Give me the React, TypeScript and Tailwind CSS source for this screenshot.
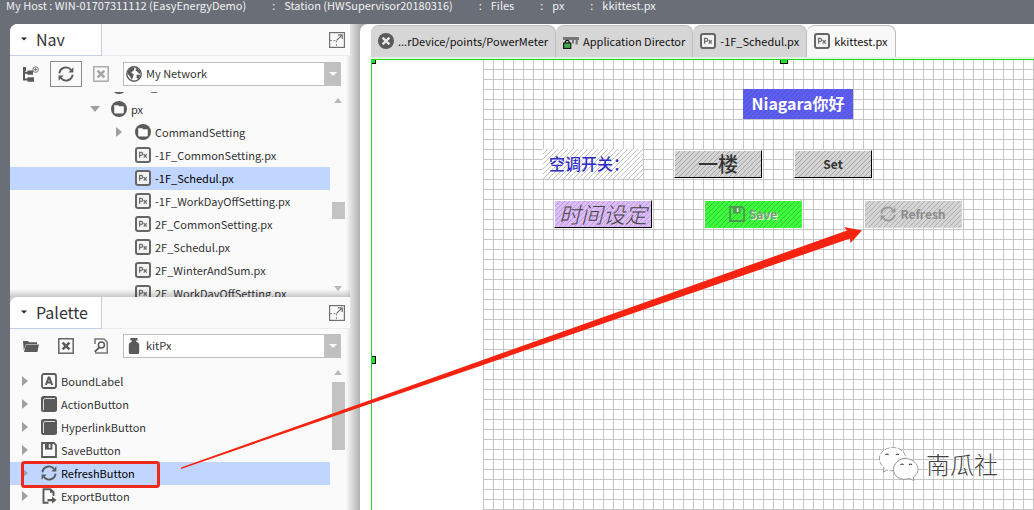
import React, { ReactNode } from "react";

type IconProps = { className?: string };

const ink = "#5a5a5a";

const Svg = ({ children, className = "" }: { children: ReactNode; className?: string }) => (
  <svg viewBox="0 0 16 16" className={`size-4 shrink-0 ${className}`} fill="none" aria-hidden="true">
    {children}
  </svg>
);

const PxIcon = () => (
  <Svg>
    <rect x="1" y="1" width="14" height="14" rx="2" stroke="#666" strokeWidth="2" fill="#f3f3f3" />
    <path d="M4.6 10.8V5.4H6.2a1.5 1.5 0 0 1 0 3H4.6M8.7 7.2l3 3.4M11.7 7.2l-3 3.4" stroke="#707070" strokeWidth="1.3" />
  </Svg>
);

const FolderIcon = () => (
  <Svg>
    <circle cx="8" cy="8" r="8" fill={ink} />
    <path d="M3.2 4.2h4l1 1h4.6v6q0 1.2-1.2 1.2H4.4q-1.2 0-1.2-1.2z" fill="#fafafa" />
  </Svg>
);

const LabelIcon = () => (
  <Svg>
    <rect x="1" y="1" width="14" height="14" rx="2" stroke={ink} strokeWidth="1.8" />
    <path d="M4.9 12 7.6 4.6h.8L11.1 12M6 9.4h4" stroke={ink} strokeWidth="2" />
  </Svg>
);

const BoxIcon = () => (
  <Svg>
    <rect width="16" height="16" rx="2.5" fill={ink} />
    <path d="M2.5 14V4.2q0-1.7 1.7-1.7H14" stroke="#ddd" strokeWidth="1" />
  </Svg>
);

const SaveIcon = ({ className }: IconProps) => (
  <Svg className={className}>
    <path d="M1 1h12l2 2v12H1z" stroke="currentColor" strokeWidth="1.8" />
    <path d="M4 1h7.4v6.6H4z" fill="currentColor" />
    <path d="M7.8 2.2h1.6v3.8H7.8z" fill="#f5f5f5" />
  </Svg>
);

const RefreshIcon = ({ className }: IconProps) => (
  <Svg className={className}>
    <path d="M1.4 7.4A6.6 6.6 0 0 1 13 3.8M14.6 8.6A6.6 6.6 0 0 1 3 12.2" stroke="currentColor" strokeWidth="1.9" />
    <path d="M15.4 1.2v5.2h-5zM.6 14.8V9.6h5z" fill="currentColor" />
  </Svg>
);

const ExportIcon = () => (
  <Svg>
    <path d="M12.5 8V4.2L9.3 1.2H2.5v13.6h5" stroke={ink} strokeWidth="1.9" />
    <path d="M9 1v3.8h4z" fill={ink} />
    <path d="M6.5 11h4.5V8.6l4.6 3.5-4.6 3.5v-2.4H6.5z" fill={ink} />
  </Svg>
);

const TreeAddIcon = () => (
  <Svg>
    <path d="M1 1v12.5h6M1 6.7h6" stroke={ink} strokeWidth="2" />
    <path d="M0 1h3v4H0zM4.5 4.6H10v4.2H4.5zM4.5 11.2H11v4.6H4.5z" fill={ink} />
    <circle cx="12.6" cy="3.6" r="2.8" stroke="#777" fill="#f4f4f4" />
    <path d="M11 3.6h3.2M12.6 2v3.2" stroke="#777" />
  </Svg>
);

const CloseBoxIcon = ({ className }: IconProps) => (
  <Svg className={className}>
    <rect x=".8" y=".8" width="14.4" height="14.4" stroke="currentColor" strokeWidth="1.4" />
    <path d="m4.6 4.6 6.8 6.8M11.4 4.6l-6.8 6.8" stroke="currentColor" strokeWidth="2.6" />
  </Svg>
);

const OpenFolderIcon = () => (
  <Svg>
    <path d="M0 3h5l1 1.2h8V6H3L.8 12.5z" fill={ink} />
    <path d="M3 6.4h13L14.4 14H1z" fill={ink} />
  </Svg>
);

const FindIcon = () => (
  <Svg>
    <path d="M2 6V1h9l3.2 3v11H2" stroke="#777" strokeWidth="1.5" />
    <circle cx="8.4" cy="7" r="3" stroke={ink} strokeWidth="1.5" />
    <path d="m6.3 9.3-4.6 4.5" stroke={ink} strokeWidth="1.8" />
  </Svg>
);

const GlobeIcon = () => (
  <Svg>
    <circle cx="8" cy="8" r="7.2" stroke={ink} strokeWidth="1.4" fill="#fff" />
    <path d="M1.6 5 5 1.4l3.6.2L7.8 4.4 5.2 6.6 7.8 8.4 7 11l-1.2 3L4 10.4 1.4 7.8zM10 1.8l3.6 2.6 1.2 3.4-2-.4L11.2 5.4l-1.6-.6zM10.8 8.4l3.6.6-2.2 4.2-1.8-1.8z" fill={ink} />
  </Svg>
);

const BottleIcon = () => (
  <Svg>
    <path d="M4.4 0h7.2v2.4h-1.4v1.4q3 .8 3 3.2v7.4q0 1.6-1.6 1.6H4.4q-1.6 0-1.6-1.6V7q0-2.4 3-3.2V2.4H4.4z" fill={ink} />
  </Svg>
);

const PopOutIcon = () => (
  <Svg>
    <rect x=".6" y=".6" width="14.8" height="14.8" stroke="#6f6f6f" strokeWidth="1.2" />
    <path d="M9 2.8h4.2V7M13.2 2.8 7.6 8.4" stroke="#6f6f6f" strokeWidth="1.2" />
    <path d="M1 8.6h6.4M7.4 8.6V15" stroke="#888" strokeDasharray="2 1.4" />
  </Svg>
);

const CloseCircleIcon = () => (
  <Svg>
    <circle cx="8" cy="8" r="8" fill={ink} />
    <path d="m4.6 4.6 6.8 6.8M11.4 4.6l-6.8 6.8" stroke="#e6e6e6" strokeWidth="2.4" />
  </Svg>
);

const DirectorIcon = () => (
  <Svg>
    <path d="M0 4h16v3h-1.2v4.4h-2.2V7H11v3.4H9V7H0z" fill="#777" />
    <path d="M2.2 10.4V9.4a2 2 0 0 1 4 0v1" stroke="#111" strokeWidth="1.2" />
    <rect x=".6" y="10" width="7.2" height="5.4" fill="#3fae4a" stroke="#111" strokeWidth="1.1" />
  </Svg>
);

const Caret = ({ open, hidden }: { open?: boolean; hidden?: boolean }) => (
  <svg viewBox="0 0 12 12" className={`size-3 shrink-0 ${hidden ? "invisible" : ""}`} fill="#a0a0a0" aria-hidden="true">
    {open ? <path d="M1 3h10L6 9z" /> : <path d="M3 1v10l6-5z" />}
  </svg>
);

type Row = { label: string; icon: ReactNode; depth: number; caret?: "open" | "closed"; selected?: boolean };

const pads = ["pl-[9px]", "pl-[79px]", "pl-[103px]"];

const navRows: Row[] = [
  { label: "_", icon: <FolderIcon />, depth: 1 },
  { label: "px", icon: <FolderIcon />, depth: 1, caret: "open" },
  { label: "CommandSetting", icon: <FolderIcon />, depth: 2, caret: "closed" },
  { label: "-1F_CommonSetting.px", icon: <PxIcon />, depth: 2 },
  { label: "-1F_Schedul.px", icon: <PxIcon />, depth: 2, selected: true },
  { label: "-1F_WorkDayOffSetting.px", icon: <PxIcon />, depth: 2 },
  { label: "2F_CommonSetting.px", icon: <PxIcon />, depth: 2 },
  { label: "2F_Schedul.px", icon: <PxIcon />, depth: 2 },
  { label: "2F_WinterAndSum.px", icon: <PxIcon />, depth: 2 },
  { label: "2F_WorkDayOffSetting.px", icon: <PxIcon />, depth: 2 },
];

const paletteRows: Row[] = [
  { label: "BoundLabel", icon: <LabelIcon />, depth: 0, caret: "closed" },
  { label: "ActionButton", icon: <BoxIcon />, depth: 0, caret: "closed" },
  { label: "HyperlinkButton", icon: <BoxIcon />, depth: 0, caret: "closed" },
  { label: "SaveButton", icon: <SaveIcon className="text-[#5a5a5a]" />, depth: 0, caret: "closed" },
  { label: "RefreshButton", icon: <RefreshIcon className="text-[#5a5a5a]" />, depth: 0, caret: "closed", selected: true },
  { label: "ExportButton", icon: <ExportIcon />, depth: 0, caret: "closed" },
];

const Tree = ({ rows, label }: { rows: Row[]; label: string }) => (
  <ul aria-label={label} className="min-w-0 flex-1">
    {rows.map((r) => (
      <li key={r.label}>
        <button
          type="button"
          className={`flex h-[23px] w-full items-center pb-[2px] text-left ${pads[r.depth]} ${r.selected ? "bg-[#c1d6fe] text-black" : "text-[#333]"}`}
        >
          <Caret open={r.caret === "open"} hidden={!r.caret} />
          <span className="ml-[10px] flex items-center gap-1">
            {r.icon}
            <span className={r.label === "_" ? "ml-5" : ""}>{r.label}</span>
          </span>
        </button>
      </li>
    ))}
  </ul>
);

const PanelHeader = ({ title }: { title: string }) => (
  <header className="flex h-8 shrink-0 items-center justify-between rounded-tl-lg border-b border-[#ececec] bg-[#fafafa] pr-[5px]">
    <h2 className="flex h-8 w-[92px] items-center gap-2 rounded-tl-lg border-r border-b border-[#c5cee6] bg-white pl-[10px] text-base text-[#333]">
      <svg viewBox="0 0 8 8" className="size-2 shrink-0" fill="#222" aria-hidden="true">
        <path d="M1 2.5h6L4 5.5z" />
      </svg>
      {title}
    </h2>
    <button type="button" aria-label={`Undock ${title}`}>
      <PopOutIcon />
    </button>
  </header>
);

const Picker = ({ label, value, icon }: { label: string; value: string; icon: ReactNode }) => (
  <label className="relative ml-[14px] mr-[9px] flex h-6 flex-1 items-center">
    <span className="pointer-events-none absolute left-[3px]">{icon}</span>
    <select
      aria-label={label}
      className="h-6 w-full appearance-none border border-[#bfbfbf] bg-white pb-[2px] pl-[22px] text-[11px] text-[#333]"
    >
      <option>{value}</option>
    </select>
    <span className="pointer-events-none absolute right-0 flex h-6 w-[17px] items-center justify-center bg-[#c0c0c0]">
      <svg viewBox="0 0 8 8" className="size-2" fill="#fff" aria-hidden="true">
        <path d="M0 2h8L4 6z" />
      </svg>
    </span>
  </label>
);

const ScrollArrow = ({ down }: { down?: boolean }) => (
  <svg viewBox="0 0 8 5" className={`h-[5px] w-2 shrink-0 ${down ? "rotate-180" : ""}`} fill="#b8b8b8" aria-hidden="true">
    <path d="M0 5h8L4 0z" />
  </svg>
);

const crumbs = ["My Host : WIN-01707311112 (EasyEnergyDemo)", "Station (HWSupervisor20180316)", "Files", "px", "kkittest.px"];

const tabs = [
  { label: "...rDevice/points/PowerMeter", icon: <CloseCircleIcon /> },
  { label: "Application Director", icon: <DirectorIcon /> },
  { label: "-1F_Schedul.px", icon: <PxIcon /> },
  { label: "kkittest.px", icon: <PxIcon />, active: true },
];

const Hatch = ({ id, color }: { id: string; color: string }) => (
  <svg className="pointer-events-none absolute inset-0 size-full" aria-hidden="true">
    <defs>
      <pattern id={id} width="5" height="5" patternUnits="userSpaceOnUse">
        <path d="M-1 1 1-1M0 5 5 0M4 6 6 4" stroke={color} strokeWidth=".9" />
      </pattern>
    </defs>
    <rect width="100%" height="100%" fill={`url(#${id})`} />
  </svg>
);

const widget = "absolute flex items-center whitespace-nowrap";
const button = "justify-center gap-1 border border-t-white border-l-white h-[28px]";
const raised = "border-r-black border-b-black";
const flat = "border-r-transparent border-b-transparent";
const handle = "absolute border border-black bg-[#22e022]";

const WeChatIcon = () => (
  <svg viewBox="0 0 42 36" className="h-9 w-[42px]" fill="#fff" stroke="#777" strokeWidth=".7" aria-hidden="true">
    <path d="M5.6 26 6 21.6C-3 14 2 2 14.500 1.500 22 1.500 27.500 6 28 12.500 20 13 15 18 16 24.500 13 25 11 24.500 9 24z" strokeDasharray="5 1.500" />
    <path d="M36 34.500 31.500 32.500C22 35.500 15.500 30 15.500 23.500 16 16.500 22 12.500 28 12.500 35 13 40 18 40 23.500 40 27 38 29.500 35 31.500z" />
    <path d="M7.500 9q1.500-2 3 0M18 9q1.500-2 3 0M22.500 19q1.500-2 3 0M31 19q1.500-2 3 0" fill="none" stroke="#444" strokeWidth="1.200" />
  </svg>
);

export default function App() {
  return (
    <div className="relative flex h-screen flex-col overflow-hidden bg-[#6a6e77] font-['Noto_Sans_CJK_SC',sans-serif] text-[11px] leading-4 text-[#333]">
      <nav aria-label="Location" className="h-6 shrink-0 pl-[6px]">
        <ol className="flex leading-[10px] whitespace-nowrap text-[#f1f1f1]">
          {crumbs.map((c, i) => (
            <li key={c} className="flex">
              {i > 0 && <span className="w-[38px] pl-[26px]">:</span>}
              <a href="#">{c}</a>
            </li>
          ))}
        </ol>
      </nav>

      <div className="flex min-h-0 flex-1 pl-[10px]">
        <aside className="flex w-[350px] shrink-0 flex-col rounded-tl-lg bg-linear-to-r from-[#fafafa] from-96% to-[#b0b0b0] pr-[10px]">
          <section className="flex h-[273px] shrink-0 flex-col">
            <PanelHeader title="Nav" />
            <div className="flex h-9 shrink-0 items-center pl-[13px]">
              <button type="button" aria-label="New tree view"><TreeAddIcon /></button>
              <button type="button" aria-label="Refresh tree" className="ml-[11px] flex h-[26px] w-8 items-center justify-center border border-[#8a8a8a]">
                <RefreshIcon className="text-[#5a5a5a]" />
              </button>
              <button type="button" aria-label="Close tree" className="ml-[11px]"><CloseBoxIcon className="text-[#a5a5a5]" /></button>
              <Picker label="Tree root" value="My Network" icon={<GlobeIcon />} />
            </div>
            <div className="relative flex min-h-0 flex-1 overflow-hidden">
              <div className="-mt-[17px] flex min-w-0 flex-1"><Tree rows={navRows} label="Nav tree" /></div>
              <div className="mr-1 flex w-4 flex-col items-center py-[6px]">
                <ScrollArrow />
                <div className="mt-[99px] h-[17px] w-[13px] bg-[#c3c3c3]" />
                <div className="flex-1" />
                <ScrollArrow down />
              </div>
              <div className="pointer-events-none absolute inset-x-0 bottom-0 h-2 bg-linear-to-b from-transparent to-black/20" />
            </div>
          </section>
          <section className="flex min-h-0 flex-1 flex-col">
            <div className="bg-[#cfcfcf]"><PanelHeader title="Palette" /></div>
            <div className="flex h-9 shrink-0 items-center pb-[2px] pl-[13px]">
              <button type="button" aria-label="Open palette"><OpenFolderIcon /></button>
              <button type="button" aria-label="Close palette" className="ml-[19px]"><CloseBoxIcon className="text-[#5a5a5a]" /></button>
              <button type="button" aria-label="Preview" className="ml-[19px]"><FindIcon /></button>
              <Picker label="Palette module" value="kitPx" icon={<BottleIcon />} />
            </div>
            <div className="flex min-h-0 flex-1 overflow-hidden pt-[5px]">
              <Tree rows={paletteRows} label="Palette tree" />
              <div className="mr-1 flex w-4 flex-col items-center">
                <ScrollArrow />
                <div className="mt-[7px] h-[68px] w-[13px] bg-[#c3c3c3]" />
              </div>
            </div>
          </section>
        </aside>

        <div className="flex min-w-0 flex-1 bg-[#b0b0b0]">
          <main className="flex min-w-0 flex-1 flex-col rounded-tl-lg bg-white pl-[11px]">
            <div role="tablist" className="mt-px flex h-[34px] shrink-0 border-b-2 border-[#dff5df]">
              {tabs.map((t) => (
                <button
                  key={t.label}
                  type="button"
                  role="tab"
                  aria-selected={!!t.active}
                  className={`flex items-center gap-1 rounded-t-lg border-t border-r border-[#bdbdbd] px-[7px] pb-[2px] whitespace-nowrap text-[#111] ${t.active ? "bg-[#f8f8f8]" : "bg-[#d6d6d6]"}`}
                >
                  {t.icon}
                  {t.label}
                </button>
              ))}
            </div>
            <div className="relative flex min-h-0 flex-1 overflow-hidden border-t border-l border-t-[#22d622] border-l-[#22d622] pl-[111px]">
              <div className="flex-1 bg-[linear-gradient(to_right,#c6c6c6_1px,transparent_1px),linear-gradient(to_bottom,#c6c6c6_1px,transparent_1px)] bg-size-[10px_10px] bg-position-[0_9px]" />

              <span className={`${handle} top-0 left-0 h-1 w-1 border-t-0 border-l-0`} />
              <span className={`${handle} top-0 left-[408px] h-1 w-2 border-t-0`} />
              <span className={`${handle} top-[296px] left-0 h-2 w-1 border-l-0`} />

              <div className={`${widget} top-[29px] left-[371px] h-[30px] w-[110px] justify-center bg-[#5c5cf8] pb-[2px] text-base font-bold text-white`}>
                <Hatch id="hatch-title" color="#5555b8" />
                <span className="relative">Niagara你好</span>
              </div>
              <div className={`${widget} top-[89px] left-[171px] h-[30px] w-[100px] bg-white pb-[2px] pl-[6px] text-base font-medium text-[#2c2cc8]`}>
                <Hatch id="hatch-label" color="#bbb" />
                <span className="relative">空调开关：</span>
              </div>
              <button type="button" className={`${widget} ${button} ${raised} top-[90px] left-[302px] w-[88px] bg-[#d4d4d4] text-xl font-medium text-[#333]`}>
                <Hatch id="hatch-floor" color="#a0a0a0" />
                <span className="relative">一楼</span>
              </button>
              <button type="button" className={`${widget} ${button} ${raised} top-[90px] left-[422px] w-[78px] bg-[#d4d4d4] text-xs font-bold text-[#333]`}>
                <Hatch id="hatch-set" color="#a0a0a0" />
                <span className="relative">Set</span>
              </button>
              <button type="button" className={`${widget} ${button} ${raised} top-[140px] left-[182px] w-[98px] bg-[#dcbcfa] pb-[2px] text-[22px] font-light text-[#444] italic`}>
                <Hatch id="hatch-time" color="#b79bd0" />
                <span className="relative">时间设定</span>
              </button>
              <button type="button" className={`${widget} ${button} ${flat} top-[140px] left-[332px] w-[98px] bg-[#3bfd3b] text-xs font-bold text-[#7d9a7d]`}>
                <Hatch id="hatch-save" color="#37c037" />
                <SaveIcon className="relative text-[#4f9a4f]" />
                <span className="relative text-shadow-[1px_1px_0_#e8f8e8]">Save</span>
              </button>
              <button type="button" className={`${widget} ${button} ${flat} top-[140px] left-[492px] w-[98px] bg-[#d4d4d4] text-xs font-bold text-[#8c8c8c]`}>
                <Hatch id="hatch-refresh" color="#aaa" />
                <RefreshIcon className="relative text-[#999]" />
                <span className="relative">Refresh</span>
              </button>

              <div className="absolute top-[386px] left-[506px] flex items-center gap-[6px] text-2xl font-light whitespace-nowrap text-[#444] text-shadow-[-1px_-1px_0_#fff]">
                <WeChatIcon />
                南瓜社
              </div>
            </div>
          </main>
        </div>
      </div>

      <svg className="pointer-events-none absolute inset-0 size-full" aria-hidden="true">
        <rect x="22.500" y="462.500" width="136" height="24" rx="2" fill="none" stroke="#ee2a1c" strokeWidth="3" />
        <path d="M181 467.400 847 230.500 844 227 862 230.500 850.500 243 850 238.500 181 469z" fill="#f5230f" />
      </svg>
    </div>
  );
}
